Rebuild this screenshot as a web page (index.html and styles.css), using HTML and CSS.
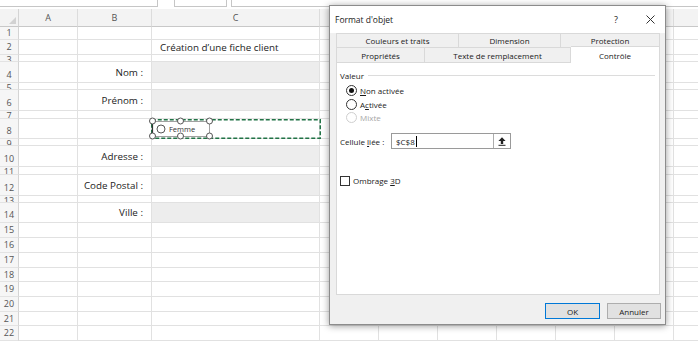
FILE: index.html
```html
<!DOCTYPE html>
<html lang="fr">
<head>
<meta charset="utf-8">
<title>Format d'objet</title>
<link rel="stylesheet" href="styles.css">
</head>
<body>
<div class="fbar">
  <div class="namebox"></div>
  <div class="dots">⋮</div>
  <div class="fxbox"><span>fx</span></div>
  <div class="formula"></div>
</div>

<div class="sheet">
  <div class="row head">
    <div class="rn corner"><span class="tri"></span></div>
    <div class="c a">A</div><div class="c b">B</div><div class="c cc">C</div><div class="c rest"></div>
  </div>
  <div class="row h13"><div class="rn">1</div><div class="c a"></div><div class="c b"></div><div class="c cc"></div><div class="c rest"></div></div>
  <div class="row h15"><div class="rn">2</div><div class="c a"></div><div class="c b"></div><div class="c cc title">Création d’une fiche client</div><div class="c rest"></div></div>
  <div class="row h7"><div class="rn sm">3</div><div class="c a"></div><div class="c b"></div><div class="c cc"></div><div class="c rest"></div></div>
  <div class="row h21"><div class="rn low">4</div><div class="c a"></div><div class="c b lbl">Nom :</div><div class="c cc fill"></div><div class="c rest"></div></div>
  <div class="row h7"><div class="rn sm">5</div><div class="c a"></div><div class="c b"></div><div class="c cc"></div><div class="c rest"></div></div>
  <div class="row h21"><div class="rn low">6</div><div class="c a"></div><div class="c b lbl">Prénom :</div><div class="c cc fill"></div><div class="c rest"></div></div>
  <div class="row h8"><div class="rn sm">7</div><div class="c a"></div><div class="c b"></div><div class="c cc"></div><div class="c rest"></div></div>
  <div class="row h20"><div class="rn low">8</div><div class="c a"></div><div class="c b"></div><div class="c cc"></div><div class="c rest"></div></div>
  <div class="row h7"><div class="rn sm">9</div><div class="c a"></div><div class="c b"></div><div class="c cc"></div><div class="c rest"></div></div>
  <div class="row h21"><div class="rn low">10</div><div class="c a"></div><div class="c b lbl">Adresse :</div><div class="c cc fill"></div><div class="c rest"></div></div>
  <div class="row h8"><div class="rn sm">11</div><div class="c a"></div><div class="c b"></div><div class="c cc"></div><div class="c rest"></div></div>
  <div class="row h21"><div class="rn low">12</div><div class="c a"></div><div class="c b lbl">Code Postal :</div><div class="c cc fill"></div><div class="c rest"></div></div>
  <div class="row h7"><div class="rn sm">13</div><div class="c a"></div><div class="c b"></div><div class="c cc"></div><div class="c rest"></div></div>
  <div class="row h20"><div class="rn low">14</div><div class="c a"></div><div class="c b lbl">Ville :</div><div class="c cc fill"></div><div class="c rest"></div></div>
  <div class="row h15"><div class="rn">15</div><div class="c a"></div><div class="c b"></div><div class="c cc"></div><div class="c rest"></div></div>
  <div class="row h15"><div class="rn">16</div><div class="c a"></div><div class="c b"></div><div class="c cc"></div><div class="c rest"></div></div>
  <div class="row h15"><div class="rn">17</div><div class="c a"></div><div class="c b"></div><div class="c cc"></div><div class="c rest"></div></div>
  <div class="row h14"><div class="rn">18</div><div class="c a"></div><div class="c b"></div><div class="c cc"></div><div class="c rest"></div></div>
  <div class="row h15"><div class="rn">19</div><div class="c a"></div><div class="c b"></div><div class="c cc"></div><div class="c rest"></div></div>
  <div class="row h15"><div class="rn">20</div><div class="c a"></div><div class="c b"></div><div class="c cc"></div><div class="c rest"></div></div>
  <div class="row h14"><div class="rn">21</div><div class="c a"></div><div class="c b"></div><div class="c cc"></div><div class="c rest"></div></div>
  <div class="row h15"><div class="rn">22</div><div class="c a"></div><div class="c b"></div><div class="c cc"></div><div class="c rest"></div></div>
</div>

<svg class="ctrl" width="176" height="24" viewBox="0 0 176 24">
  <rect x="3.75" y="3.75" width="168.5" height="18.5" fill="none" stroke="#217346" stroke-width="1.5" stroke-dasharray="4 2"/>
  <rect x="4.5" y="5.5" width="57" height="15" fill="none" stroke="#8a8a8a" stroke-width="0.8"/>
  <line x1="4.5" y1="7" x2="4.5" y2="19" stroke="#333" stroke-width="1.2"/>
  <circle cx="13" cy="13" r="4" fill="#fff" stroke="#444" stroke-width="0.9"/>
  <g fill="#fff" stroke="#555" stroke-width="1">
    <circle cx="4.5" cy="5" r="3"/><circle cx="32.5" cy="5" r="3"/><circle cx="61.5" cy="5" r="3"/>
    <circle cx="4.5" cy="20" r="3"/><circle cx="32.5" cy="20" r="3"/><circle cx="61.5" cy="20" r="3"/>
  </g>
</svg>
<span class="ctrl-label">Femme</span>

<div class="dialog">
  <div class="titlebar">
    <span class="dtitle">Format d'objet</span>
    <span class="help">?</span>
    <span class="close"><svg width="9" height="9" viewBox="0 0 9 9"><path d="M0.5 0.5 L8.5 8.5 M8.5 0.5 L0.5 8.5" stroke="#333" stroke-width="1"/></svg></span>
  </div>
  <div class="tabs">
    <div class="tabrow">
      <div class="tab t1">Couleurs et traits</div>
      <div class="tab t2">Dimension</div>
      <div class="tab t3">Protection</div>
    </div>
    <div class="tabrow">
      <div class="tab t4">Propriétés</div>
      <div class="tab t5">Texte de remplacement</div>
      <div class="tab t6 sel">Contrôle</div>
    </div>
  </div>
  <div class="panel">
    <div class="group"><span>Valeur</span><span class="rule"></span></div>
    <div class="radios">
      <div class="radio"><span class="dot on"></span><span><u>N</u>on activée</span></div>
      <div class="radio"><span class="dot"></span><span>A<u>c</u>tivée</span></div>
      <div class="radio off"><span class="dot"></span><span>Mixte</span></div>
    </div>
    <div class="linked">
      <span class="llabel">Cellule <u>l</u>iée :</span>
      <div class="input">
        <span class="val">$C$8</span><span class="caret"></span>
        <span class="refbtn"><svg width="8" height="9" viewBox="0 0 8 9"><path d="M4 0.3 L7.6 4 H5.2 V7 H2.8 V4 H0.4 Z" fill="#222"/><rect x="0.5" y="7.8" width="7" height="1" fill="#222"/></svg></span>
      </div>
    </div>
    <div class="check"><span class="box"></span><span>Ombrage <u>3</u>D</span></div>
  </div>
  <div class="buttons">
    <button class="btn default">OK</button>
    <button class="btn">Annuler</button>
  </div>
</div>
</body>
</html>
```

FILE: styles.css
```css
* { box-sizing: border-box; }
html, body { margin: 0; padding: 0; }
body {
  width: 698px;
  height: 343px;
  overflow: hidden;
  position: relative;
  background: #fff;
  font-family: "Open Sans", "Liberation Sans", sans-serif;
  color: #222;
}

/* formula bar (cut off at top) */
.fbar {
  height: 9px;
  display: flex;
  align-items: flex-end;
  overflow: hidden;
}
.fbar > div {
  flex: none;
  height: 24px;
  margin-bottom: 2px;
  border: 1px solid #c6c6c6;
  background: #fff;
}
.fbar .namebox { width: 158px; border-left: none; }
.fbar .dots {
  width: 16px;
  border: none;
  background: none;
  font-size: 10px;
  line-height: 24px;
  text-align: center;
  color: #777;
}
.fbar .fxbox {
  width: 53px;
  font-size: 10px;
  font-style: italic;
  color: #555;
  text-align: right;
  padding-right: 6px;
  line-height: 12px;
}
.fbar .formula { flex: 1; margin-left: 4px; border-right: none; }

/* sheet */
.sheet { display: flex; flex-direction: column; }
.row { display: flex; flex: none; }
.h7 { height: 7px; } .h8 { height: 8px; } .h13 { height: 13px; }
.h14 { height: 14px; } .h15 { height: 15px; } .h20 { height: 20px; } .h21 { height: 21px; }

.rn {
  width: 19px;
  flex: none;
  background: #f6f6f6;
  border-right: 1px solid #d4d4d4;
  border-bottom: 1px solid #e3e3e3;
  font-size: 9px;
  line-height: 10px;
  color: #555;
  display: flex;
  align-items: center;
  justify-content: center;
  overflow: hidden;
}
.rn.sm { align-items: flex-start; }
.rn.low { align-items: flex-end; padding-bottom: 2px; }

.c {
  flex: none;
  border-right: 1px solid #e1e1e1;
  border-bottom: 1px solid #e1e1e1;
  overflow: hidden;
  white-space: nowrap;
}
.a { width: 59px; }
.b { width: 74px; }
.cc { width: 168px; }
.rest {
  flex: 1;
  border-right: none;
  background-image: repeating-linear-gradient(to right, transparent 0 58px, #e1e1e1 58px 59px);
}
.fill { background: #ededed; }

.head { height: 18px; }
.head .c {
  background: #f3f3f3;
  border-bottom: 1px solid #c8c8c8;
  border-right-color: #dcdcdc;
  font-size: 9px;
  color: #555;
  display: flex;
  align-items: center;
  justify-content: center;
}
.head .rest {
  background-color: #f3f3f3;
  background-image: repeating-linear-gradient(to right, transparent 0 58px, #dcdcdc 58px 59px);
}
.head .rn { background: #f3f3f3; border-bottom: 1px solid #c8c8c8; position: relative; }
.tri {
  position: absolute;
  right: 2px;
  bottom: 2px;
  width: 0;
  height: 0;
  border-left: 7px solid transparent;
  border-bottom: 7px solid #d2d2d2;
}

.title, .lbl {
  font-size: 9.8px;
  color: #222;
  display: flex;
  align-items: center;
}
.title { padding-left: 8px; padding-top: 1px; }
.lbl { justify-content: flex-end; padding-right: 8px; }

/* radio form control on the sheet */
.ctrl { position: absolute; left: 148px; top: 116px; }
.ctrl-label {
  position: absolute;
  left: 169px;
  top: 124px;
  font-size: 7.5px;
  line-height: 10px;
  color: #333;
}

/* dialog */
.dialog {
  position: absolute;
  left: 329px;
  top: 5px;
  width: 337px;
  height: 320px;
  background: #f0f0f0;
  border: 1px solid #8c8c8c;
  box-shadow: 0 1px 7px rgba(0, 0, 0, 0.4);
  display: flex;
  flex-direction: column;
  font-size: 8px;
  color: #1a1a1a;
}
.titlebar {
  height: 27px;
  flex: none;
  background: #fff;
  display: flex;
  align-items: center;
  padding-left: 5px;
  padding-right: 3px;
}
.dtitle { flex: 1; font-size: 8.5px; }
.help { width: 20px; text-align: center; font-size: 9px; margin-right: 12px; }
.close { width: 24px; display: flex; justify-content: center; }

.tabs { margin-left: 6px; width: 324px; flex: none; }
.tabrow { display: flex; align-items: flex-start; height: 14px; }
.tabrow + .tabrow { height: 15px; }
.tab {
  flex: none;
  height: 100%;
  border: 1px solid #d9d9d9;
  border-bottom: none;
  border-left: none;
  background: #f0f0f0;
  display: flex;
  align-items: center;
  justify-content: center;
  white-space: nowrap;
}
.tab.t1, .tab.t4 { border-left: 1px solid #d9d9d9; }
.t1 { width: 123px; } .t2 { width: 102px; } .t3 { width: 99px; }
.t4 { width: 89px; } .t5 { width: 146px; } .t6 { width: 89px; }
.tab.sel {
  background: #fff;
  height: 17px;
  margin-top: -1px;
  position: relative;
  z-index: 1;
}

.panel {
  margin-left: 6px;
  width: 324px;
  height: 233px;
  flex: none;
  background: #fff;
  border: 1px solid #d9d9d9;
  display: flex;
  flex-direction: column;
  padding-left: 3px;
}
.group {
  display: flex;
  align-items: center;
  height: 12px;
  margin-top: 6px;
}
.rule { flex: 1; height: 1px; background: #dcdcdc; margin: 0 4px 0 4px; }

.radios { margin-top: 3px; display: flex; flex-direction: column; }
.radio {
  height: 13.5px;
  display: flex;
  align-items: center;
  padding-left: 6px;
}
.dot {
  width: 11px;
  height: 11px;
  border-radius: 50%;
  border: 1px solid #333;
  background: #fff;
  margin-right: 3px;
  display: flex;
  align-items: center;
  justify-content: center;
}
.dot.on::after {
  content: "";
  width: 5px;
  height: 5px;
  border-radius: 50%;
  background: #111;
}
.radio.off { color: #a6a6a6; }
.radio.off .dot { border-color: #cfcfcf; }

.linked {
  margin-top: 8.5px;
  height: 16px;
  display: flex;
  align-items: center;
}
.llabel { width: 51px; flex: none; white-space: nowrap; }
.input {
  width: 120px;
  height: 16px;
  border: 1px solid #9a9a9a;
  display: flex;
  align-items: center;
  padding-left: 4px;
}
.val { font-size: 8px; }
.caret { width: 1px; height: 11px; background: #000; margin-left: 1px; }
.refbtn {
  margin-left: auto;
  width: 17px;
  height: 100%;
  border-left: 1px solid #adadad;
  display: flex;
  align-items: center;
  justify-content: center;
}

.check {
  margin-top: 26px;
  height: 11px;
  display: flex;
  align-items: center;
}
.box {
  width: 10px;
  height: 10px;
  border: 1px solid #333;
  background: #fff;
  margin-right: 3px;
}

.buttons {
  margin-top: 8px;
  display: flex;
  justify-content: flex-end;
  gap: 7px;
  padding-right: 4px;
}
.btn {
  height: 16px;
  width: 54px;
  padding: 0;
  border: 1px solid #adadad;
  background: #e1e1e1;
  font-family: "Open Sans", "Liberation Sans", sans-serif;
  font-size: 8px;
  color: #1a1a1a;
}
.btn.default { width: 55px; border-color: #0078d7; }
```
